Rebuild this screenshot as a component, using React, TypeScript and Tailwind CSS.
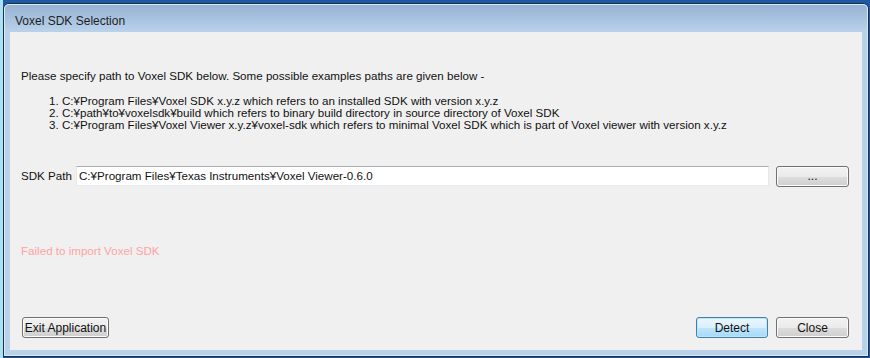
import React from "react";

const font = { fontFamily: '"Liberation Sans", "Noto Sans CJK JP", sans-serif' };

function WinButton({ label, width, focused }: { label: string; width: string; focused?: boolean }) {
  // Win7 style push button; focused one gets the blue rim
  return (
    <button
      className={`${width} h-[21px] rounded-[3px] border text-[12px] leading-none text-[#111] ${
        focused
          ? "border-[#3c7fb1] bg-[linear-gradient(to_bottom,#eaf6fd_0%,#d9f0fc_50%,#bee6fd_51%,#a7d9f5_100%)] shadow-[inset_0_0_0_1px_#c4e5f6]"
          : "border-[#707070] bg-[linear-gradient(to_bottom,#f2f2f2_0%,#ebebeb_50%,#dddddd_51%,#cfcfcf_100%)] shadow-[inset_0_0_0_1px_#fbfbfb]"
      }`}
    >
      {label}
    </button>
  );
}

export default function App() {
  const examples = [
    "1. C:¥Program Files¥Voxel SDK x.y.z which refers to an installed SDK with version x.y.z",
    "2. C:¥path¥to¥voxelsdk¥build which refers to binary build directory in source directory of Voxel SDK",
    "3. C:¥Program Files¥Voxel Viewer x.y.z¥voxel-sdk which refers to minimal Voxel SDK which is part of Voxel viewer with version x.y.z",
  ];

  return (
    <div
      className="w-[870px] h-[358px] bg-[#1b5aa3] border-l-[3px] border-l-[#a9e2f3] pt-[3px] pr-[1px] pb-[1px] overflow-hidden"
      style={font}
    >
      {/* window frame */}
      <div className="w-[866px] h-[354px] rounded-t-[6px] border border-[#1c2f47] bg-[#b9d1ea]">
        <div className="h-full rounded-t-[5px] border border-[#d7eaf6] flex flex-col bg-[linear-gradient(to_bottom,#97b3d2_0px,#a8c3e0_14px,#b9d1ea_26px,#b9d1ea_100%)]">
          {/* title bar */}
          <div className="h-[27px] shrink-0 pl-[10px] pt-[9px] text-[12px] leading-[14px] text-[#1e1e1e]">
            Voxel SDK Selection
          </div>
          {/* client area */}
          <div className="mx-[5px] mb-[5px] flex-1 bg-[#f0f0f0] flex flex-col pl-[11px] pr-[13px] pt-[37px] pb-[12px] text-[11.6px] text-[#111]">
            <p className="leading-[14px]">
              Please specify path to Voxel SDK below. Some possible examples paths are given below -
            </p>
            <div className="mt-[12px] pl-[28px] leading-[12px]">
              {examples.map((e) => (
                <div key={e}>{e}</div>
              ))}
            </div>
            <div className="mt-[35px] flex items-center h-[20px]">
              <span className="w-[55px] shrink-0 leading-[14px]">SDK Path</span>
              <div className="w-[693px] h-[20px] shrink-0 bg-white border border-[#e3e9ef] border-t-[#abadb3] flex items-center pl-[2px] leading-[14px]">
                C:¥Program Files¥Texas Instruments¥Voxel Viewer-0.6.0
              </div>
              <div className="ml-[7px]">
                <WinButton label="..." width="w-[73px]" />
              </div>
            </div>
            <p className="mt-[58px] leading-[14px] text-[#ffa3a3]">Failed to import Voxel SDK</p>
            <div className="flex-1" />
            <div className="flex items-center">
              <div className="ml-[1px]">
                <WinButton label="Exit Application" width="w-[87px]" />
              </div>
              <div className="flex-1" />
              <WinButton label="Detect" width="w-[72px]" focused />
              <div className="ml-[8px]">
                <WinButton label="Close" width="w-[73px]" />
              </div>
            </div>
          </div>
        </div>
      </div>
    </div>
  );
}
